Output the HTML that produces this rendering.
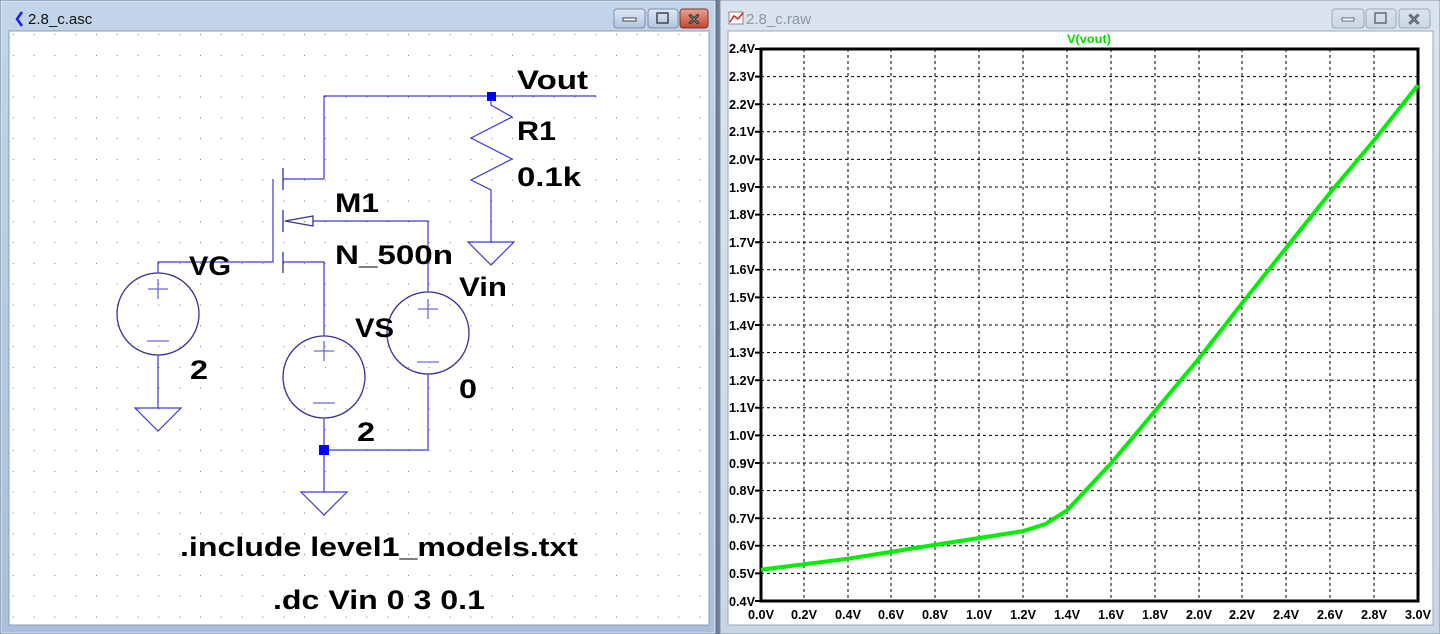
<!DOCTYPE html>
<html><head><meta charset="utf-8"><style>
html,body{margin:0;padding:0;width:1440px;height:634px;overflow:hidden;background:#6d7f96;}
svg{display:block}
</style></head><body>
<svg width="1440" height="634" xmlns="http://www.w3.org/2000/svg" font-family="Liberation Sans, sans-serif">
<defs>
<linearGradient id="tb" x1="0" y1="0" x2="0" y2="1"><stop offset="0" stop-color="#c3d5ea"/><stop offset="1" stop-color="#a9c0dc"/></linearGradient>
<linearGradient id="tb2" x1="0" y1="0" x2="0" y2="1"><stop offset="0" stop-color="#dbe4ee"/><stop offset="1" stop-color="#c9d6e4"/></linearGradient>
<linearGradient id="btn" x1="0" y1="0" x2="0" y2="1"><stop offset="0" stop-color="#dfe8f3"/><stop offset="1" stop-color="#b1c4dc"/></linearGradient>
<linearGradient id="cls" x1="0" y1="0" x2="0" y2="1"><stop offset="0" stop-color="#e8a493"/><stop offset="1" stop-color="#c2452d"/></linearGradient>
<pattern id="dots" x="12.8" y="13.3" width="20.8" height="20.8" patternUnits="userSpaceOnUse"><rect x="0" y="0" width="1" height="1" fill="#777"/></pattern>
</defs>
<rect x="0" y="0" width="716" height="634" fill="url(#tb)" stroke="#5a6b80"/>
<rect x="1" y="1" width="714" height="632" fill="none" stroke="#e4edf7" stroke-width="1"/>
<path d="M22 12 L17 19 L22 26" stroke="#1a1aff" stroke-width="2.5" fill="none"/>
<text x="28" y="24" font-size="15" fill="#111">2.8_c.asc</text>
<rect x="614" y="9" width="31" height="19" rx="3" fill="url(#btn)" stroke="#7b8ea8"/>
<rect x="623" y="18" width="13" height="3" fill="#fff" stroke="#445"/>
<rect x="648" y="9" width="30" height="19" rx="3" fill="url(#btn)" stroke="#7b8ea8"/>
<rect x="657" y="13" width="11" height="10" fill="none" stroke="#445" stroke-width="1.5"/>
<rect x="680" y="9" width="28" height="19" rx="3" fill="url(#cls)" stroke="#7a3022"/>
<text x="694" y="25" font-size="16" font-weight="bold" fill="#fff" text-anchor="middle" stroke="#333" stroke-width="0.6">✕</text>
<rect x="9" y="31" width="700" height="594" fill="#fff" stroke="#8a9bb0"/>
<rect x="10" y="32" width="698" height="592" fill="url(#dots)"/>
<g stroke="#3a3ae0" stroke-width="1.2" fill="none">
<polyline points="324,179 324,96 596,96"/>
<line x1="283" y1="179" x2="324" y2="179"/>
<polyline points="283,262 324,262 324,336"/>
<polyline points="313,221 428,221 428,292"/>
<polyline points="158,273 158,262 273,262 273,179"/>
<polyline points="491,96 491,105 512,117 471,138 512,159 471,180 491,190 491,242"/>
<polygon points="468,242 514,242 491,265"/>
<polyline points="158,355 158,408"/>
<polygon points="135,408 181,408 158,431"/>
<polyline points="324,418 324,492"/>
<polygon points="301,492 347,492 324,515"/>
<polyline points="428,374 428,450 324,450"/>
</g>
<g stroke="#33339a" stroke-width="1.3" fill="none">
<line x1="283" y1="168" x2="283" y2="190"/>
<line x1="283" y1="210" x2="283" y2="232"/>
<line x1="283" y1="252" x2="283" y2="273"/>
<polygon points="285,221 313,216 313,226"/>
<circle cx="158" cy="314" r="41"/>
<circle cx="324" cy="377" r="41"/>
<circle cx="428" cy="333" r="41"/>
</g>
<g stroke="#6a6ae0" stroke-width="1.3">
<line x1="148" y1="289" x2="168" y2="289"/><line x1="158" y1="279" x2="158" y2="299"/>
<line x1="147" y1="341" x2="169" y2="341"/>
<line x1="314" y1="351" x2="334" y2="351"/><line x1="324" y1="341" x2="324" y2="361"/>
<line x1="313" y1="403" x2="335" y2="403"/>
<line x1="418" y1="309" x2="438" y2="309"/><line x1="428" y1="299" x2="428" y2="319"/>
<line x1="417" y1="362" x2="439" y2="362"/>
</g>
<rect x="487" y="92" width="9" height="9" fill="#0000ff"/>
<rect x="319" y="445" width="10" height="10" fill="#0000ff"/>
<g font-size="27" font-weight="bold" fill="#000" lengthAdjust="spacingAndGlyphs">
<text x="517" y="89" textLength="71" lengthAdjust="spacingAndGlyphs">Vout</text>
<text x="517" y="140" textLength="39" lengthAdjust="spacingAndGlyphs">R1</text>
<text x="517" y="186" textLength="64" lengthAdjust="spacingAndGlyphs">0.1k</text>
<text x="335" y="212" textLength="44" lengthAdjust="spacingAndGlyphs">M1</text>
<text x="335" y="264" textLength="118" lengthAdjust="spacingAndGlyphs">N_500n</text>
<text x="189" y="275" textLength="42" lengthAdjust="spacingAndGlyphs">VG</text>
<text x="459" y="296" textLength="48" lengthAdjust="spacingAndGlyphs">Vin</text>
<text x="355" y="337" textLength="39" lengthAdjust="spacingAndGlyphs">VS</text>
<text x="190" y="379" textLength="18" lengthAdjust="spacingAndGlyphs">2</text>
<text x="459" y="398" textLength="18" lengthAdjust="spacingAndGlyphs">0</text>
<text x="357" y="441" textLength="18" lengthAdjust="spacingAndGlyphs">2</text>
<text x="180" y="556" textLength="398" lengthAdjust="spacingAndGlyphs">.include level1_models.txt</text>
<text x="273" y="609" textLength="212" lengthAdjust="spacingAndGlyphs">.dc Vin 0 3 0.1</text>
</g>
<rect x="720" y="0" width="720" height="634" fill="url(#tb2)" stroke="#8090a4"/>
<rect x="729" y="12" width="14" height="12" fill="#fff" stroke="#888"/>
<polyline points="730,22 734,16 738,19 743,13" stroke="#d02020" stroke-width="1.5" fill="none"/>
<text x="746" y="24" font-size="15" fill="#8a96a4">2.8_c.raw</text>
<rect x="1332" y="9" width="32" height="19" rx="3" fill="url(#tb2)" stroke="#9aa8ba"/>
<rect x="1342" y="18" width="12" height="3" fill="#fff" stroke="#667"/>
<rect x="1366" y="9" width="30" height="19" rx="3" fill="url(#tb2)" stroke="#9aa8ba"/>
<rect x="1375" y="13" width="11" height="10" fill="none" stroke="#667" stroke-width="1.5"/>
<rect x="1399" y="9" width="31" height="19" rx="3" fill="url(#tb2)" stroke="#9aa8ba"/>
<text x="1414" y="25" font-size="16" font-weight="bold" fill="#fff" text-anchor="middle" stroke="#667" stroke-width="0.8">✕</text>
<rect x="728" y="31" width="705" height="594" fill="#fff" stroke="#9aa8ba"/>
<text x="1067" y="43" font-size="12" font-weight="bold" fill="#00e000" textLength="44" lengthAdjust="spacingAndGlyphs">V(vout)</text>
<g stroke="#000" stroke-width="1" stroke-dasharray="3,3" fill="none">
<path d="M804 49V601M848 49V601M891 49V601M935 49V601M979 49V601M1023 49V601M1067 49V601M1111 49V601M1155 49V601M1199 49V601M1242 49V601M1286 49V601M1330 49V601M1374 49V601"/>
<path d="M761 76.6H1418M761 104.2H1418M761 131.8H1418M761 159.4H1418M761 187H1418M761 214.6H1418M761 242.2H1418M761 269.8H1418M761 297.4H1418M761 325H1418M761 352.6H1418M761 380.2H1418M761 407.8H1418M761 435.4H1418M761 463H1418M761 490.6H1418M761 518.2H1418M761 545.8H1418M761 573.4H1418"/>
</g>
<rect x="761" y="49" width="657" height="552" fill="none" stroke="#000" stroke-width="3"/>
<polyline fill="none" stroke="#00ee00" stroke-width="4" stroke-linejoin="round" points="761,569.7 848,558.7 935,544.9 979,538 1023,531.1 1045,524.2 1067,510.4 1111,463.4 1155,411 1199,358.5 1242,303.3 1286,248.1 1330,192.9 1374,140.4 1418,85"/>
<g font-size="13" font-weight="bold" fill="#000">
<text x="729" y="53" textLength="26" lengthAdjust="spacingAndGlyphs">2.4V</text><text x="729" y="81" textLength="26" lengthAdjust="spacingAndGlyphs">2.3V</text><text x="729" y="109" textLength="26" lengthAdjust="spacingAndGlyphs">2.2V</text><text x="729" y="136" textLength="26" lengthAdjust="spacingAndGlyphs">2.1V</text><text x="729" y="164" textLength="26" lengthAdjust="spacingAndGlyphs">2.0V</text><text x="729" y="192" textLength="26" lengthAdjust="spacingAndGlyphs">1.9V</text><text x="729" y="219" textLength="26" lengthAdjust="spacingAndGlyphs">1.8V</text><text x="729" y="247" textLength="26" lengthAdjust="spacingAndGlyphs">1.7V</text><text x="729" y="274" textLength="26" lengthAdjust="spacingAndGlyphs">1.6V</text><text x="729" y="302" textLength="26" lengthAdjust="spacingAndGlyphs">1.5V</text><text x="729" y="330" textLength="26" lengthAdjust="spacingAndGlyphs">1.4V</text><text x="729" y="357" textLength="26" lengthAdjust="spacingAndGlyphs">1.3V</text><text x="729" y="385" textLength="26" lengthAdjust="spacingAndGlyphs">1.2V</text><text x="729" y="412" textLength="26" lengthAdjust="spacingAndGlyphs">1.1V</text><text x="729" y="440" textLength="26" lengthAdjust="spacingAndGlyphs">1.0V</text><text x="729" y="468" textLength="26" lengthAdjust="spacingAndGlyphs">0.9V</text><text x="729" y="495" textLength="26" lengthAdjust="spacingAndGlyphs">0.8V</text><text x="729" y="523" textLength="26" lengthAdjust="spacingAndGlyphs">0.7V</text><text x="729" y="550" textLength="26" lengthAdjust="spacingAndGlyphs">0.6V</text><text x="729" y="578" textLength="26" lengthAdjust="spacingAndGlyphs">0.5V</text><text x="729" y="606" textLength="26" lengthAdjust="spacingAndGlyphs">0.4V</text>
</g>
<g stroke="#000" stroke-width="2"><path d="M755 49h6M755 76.6h6M755 104.2h6M755 131.8h6M755 159.4h6M755 187h6M755 214.6h6M755 242.2h6M755 269.8h6M755 297.4h6M755 325h6M755 352.6h6M755 380.2h6M755 407.8h6M755 435.4h6M755 463h6M755 490.6h6M755 518.2h6M755 545.8h6M755 573.4h6M755 601h6"/></g>
<g font-size="13" font-weight="bold" fill="#000">
<text x="748" y="619" textLength="26" lengthAdjust="spacingAndGlyphs">0.0V</text><text x="791" y="619" textLength="26" lengthAdjust="spacingAndGlyphs">0.2V</text><text x="835" y="619" textLength="26" lengthAdjust="spacingAndGlyphs">0.4V</text><text x="878" y="619" textLength="26" lengthAdjust="spacingAndGlyphs">0.6V</text><text x="922" y="619" textLength="26" lengthAdjust="spacingAndGlyphs">0.8V</text><text x="966" y="619" textLength="26" lengthAdjust="spacingAndGlyphs">1.0V</text><text x="1010" y="619" textLength="26" lengthAdjust="spacingAndGlyphs">1.2V</text><text x="1054" y="619" textLength="26" lengthAdjust="spacingAndGlyphs">1.4V</text><text x="1098" y="619" textLength="26" lengthAdjust="spacingAndGlyphs">1.6V</text><text x="1142" y="619" textLength="26" lengthAdjust="spacingAndGlyphs">1.8V</text><text x="1186" y="619" textLength="26" lengthAdjust="spacingAndGlyphs">2.0V</text><text x="1229" y="619" textLength="26" lengthAdjust="spacingAndGlyphs">2.2V</text><text x="1273" y="619" textLength="26" lengthAdjust="spacingAndGlyphs">2.4V</text><text x="1317" y="619" textLength="26" lengthAdjust="spacingAndGlyphs">2.6V</text><text x="1361" y="619" textLength="26" lengthAdjust="spacingAndGlyphs">2.8V</text><text x="1405" y="619" textLength="26" lengthAdjust="spacingAndGlyphs">3.0V</text>
</g>
</svg>
</body></html>
